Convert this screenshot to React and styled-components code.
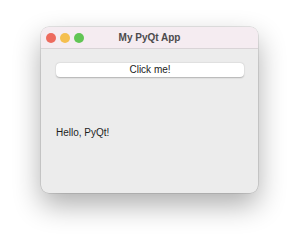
import React from "react";
import styled, { createGlobalStyle } from "styled-components";

const Global = createGlobalStyle`
    html, body {
        margin: 0;
        padding: 0;
        background: #ffffff;
        font-family: "Liberation Sans", Arial, sans-serif;
    }
`;

const Page = styled.div`
    padding: 27px 0 0 41px;
    width: 300px;
    height: 248px;
    box-sizing: border-box;
`;

const Window = styled.div`
    width: 217px;
    height: 166px;
    border-radius: 8px;
    overflow: hidden;
    background: #ececec;
    display: flex;
    flex-direction: column;
    box-shadow: 0 12px 28px rgba(0, 0, 0, 0.32), 0 0 0 0.5px rgba(0, 0, 0, 0.18);
`;

const TitleBar = styled.div`
    height: 21px;
    flex-shrink: 0;
    background: #f5ecf1;
    border-bottom: 1px solid #d9d4d7;
    display: grid;
    grid-template-columns: 1fr auto 1fr;
    align-items: center;
    padding: 0 5px;
`;

const Lights = styled.div`
    display: flex;
    gap: 4px;
`;

const Light = styled.span`
    width: 10px;
    height: 10px;
    border-radius: 50%;
    background: ${(p) => p.color};
`;

const Title = styled.div`
    font-size: 10px;
    line-height: 12px;
    font-weight: bold;
    color: #4c4a4c;
`;

const Content = styled.div`
    display: flex;
    flex-direction: column;
    padding: 14px 14px 0 15px;
`;

const Button = styled.button`
    height: 14px;
    padding: 0;
    border: none;
    border-radius: 4px;
    background: #ffffff;
    box-shadow: 0 0.5px 1.5px rgba(0, 0, 0, 0.25);
    font-family: "Liberation Sans", Arial, sans-serif;
    font-size: 10px;
    line-height: 14px;
    color: #222;
`;

const Label = styled.div`
    margin-top: 50px;
    font-size: 10px;
    line-height: 12px;
    color: #1e1e1e;
`;

export default function App() {
    return (
        <Page>
            <Global />
            <Window>
                <TitleBar>
                    <Lights>
                        <Light color="#ed6a5e" />
                        <Light color="#f5bf4f" />
                        <Light color="#61c554" />
                    </Lights>
                    <Title>My PyQt App</Title>
                    <div />
                </TitleBar>
                <Content>
                    <Button>Click me!</Button>
                    <Label>Hello, PyQt!</Label>
                </Content>
            </Window>
        </Page>
    );
}
